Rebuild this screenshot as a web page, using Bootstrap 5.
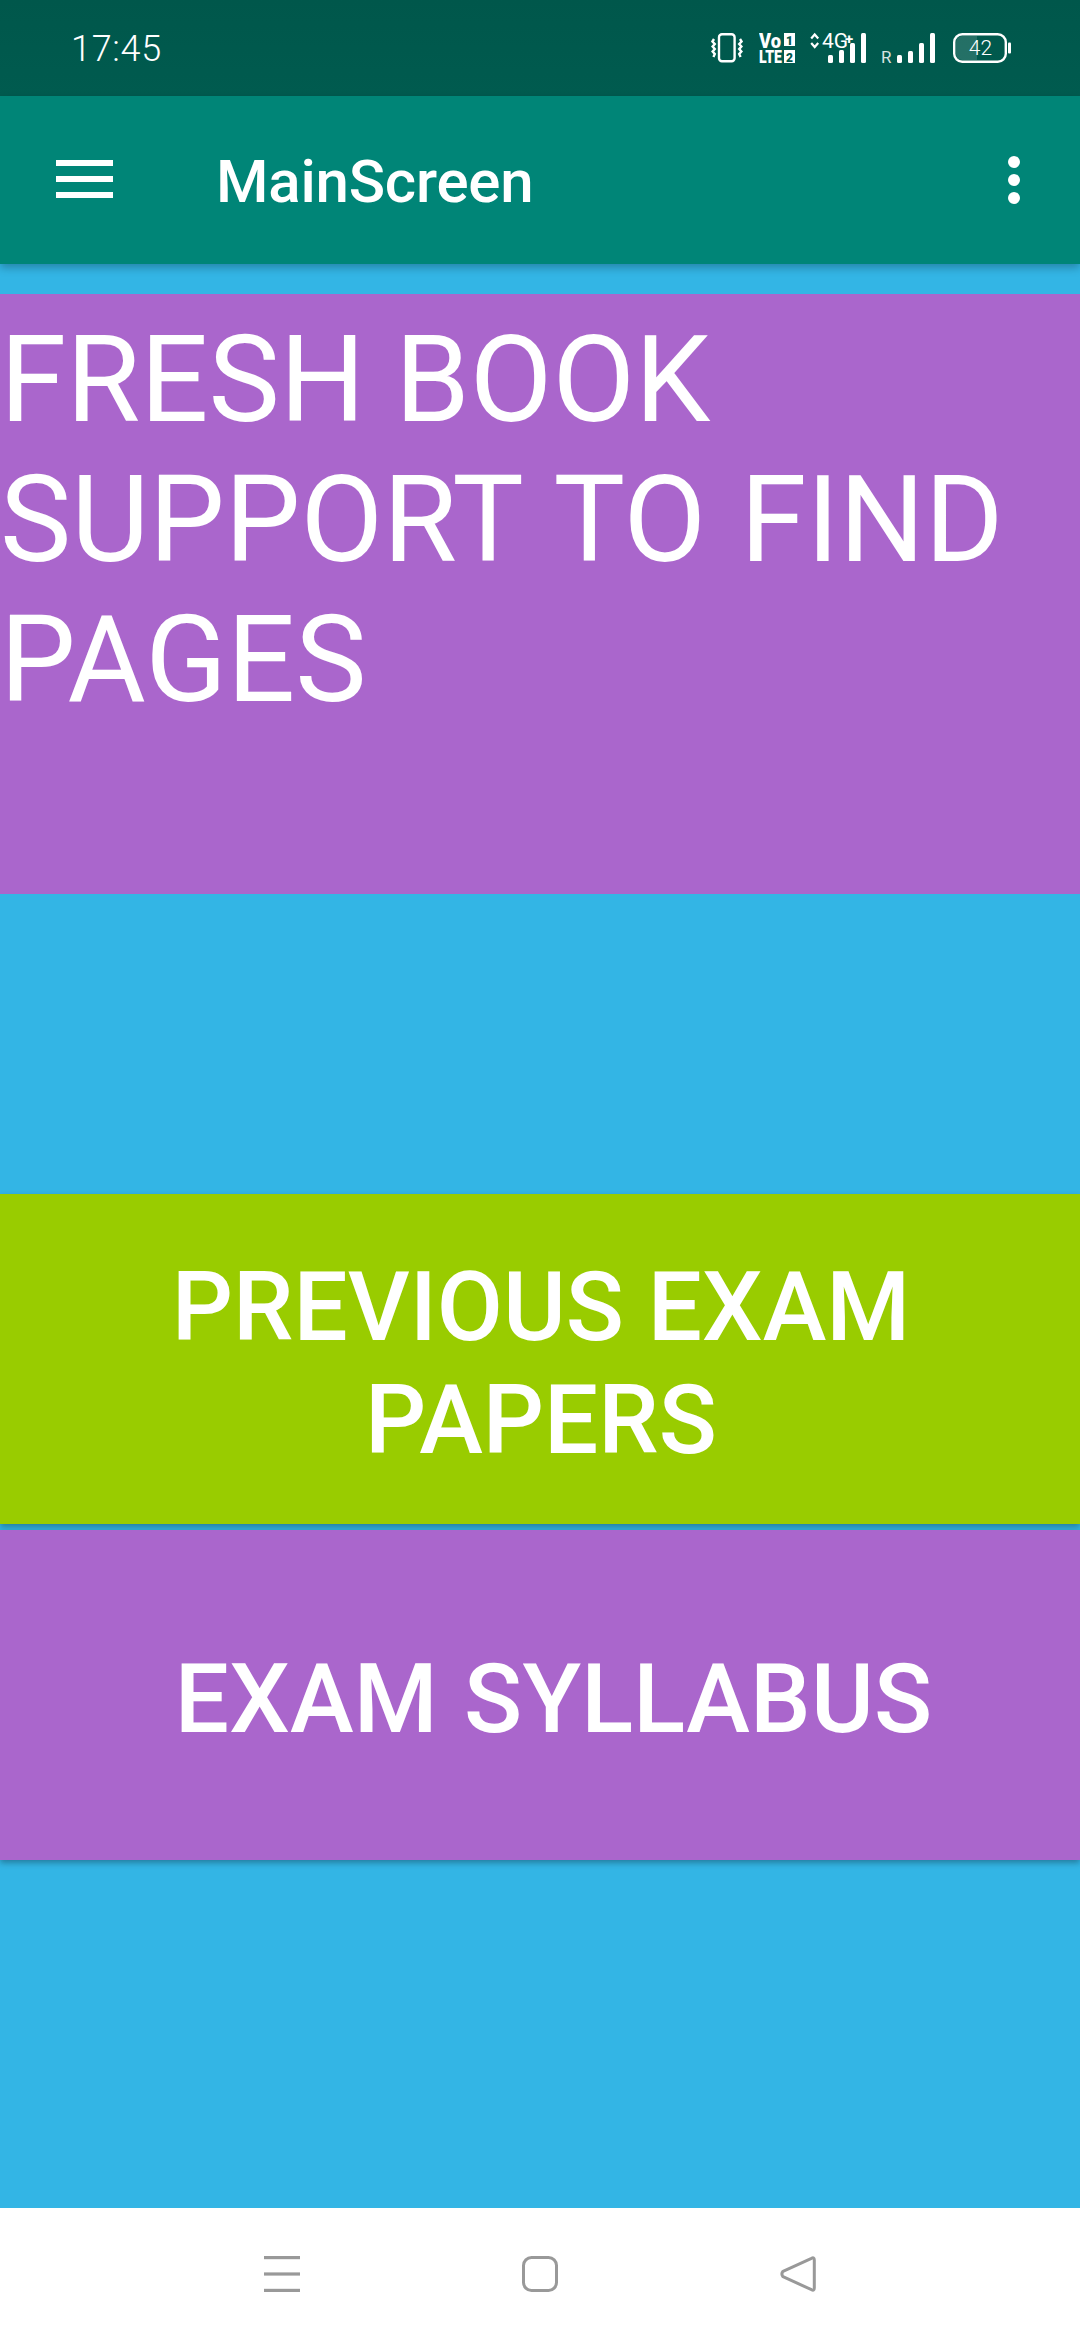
<!DOCTYPE html>
<html lang="en">
<head>
<meta charset="utf-8">
<title>MainScreen</title>
<link href="https://cdn.jsdelivr.net/npm/bootstrap@5.3.0/dist/css/bootstrap.min.css" rel="stylesheet">
<style>
html,body{margin:0;padding:0;width:1080px;height:2340px;overflow:hidden;font-family:Roboto,"Liberation Sans",sans-serif;background:#33b5e5}
.phone{width:1080px;height:2340px}
.statusbar{height:96px;background:linear-gradient(#00574b,#005b4f);color:#fff;padding-left:71px;padding-right:69px}
.clock{font-size:36px;font-weight:300;line-height:1;letter-spacing:.7px;margin-top:1px}
.staticons{gap:15px}
.gapplus1{margin-left:1px}
.gapplus3{margin-left:3px}
.appbar.navbar{height:168px;background:#008577;color:#fff;box-shadow:0 4px 8px rgba(0,0,0,.25);position:relative;z-index:2;padding:0 60px 0 56px}
.burger{margin-bottom:2px}
.apptitle{font-size:60px;font-weight:500;line-height:1;margin-left:103px;margin-top:3px;letter-spacing:-.2px}
.stage{background:#33b5e5;height:1944px;padding-top:30px}
.headline{background:#aa66cc;color:#fff;height:600px;font-size:120px;font-weight:400;line-height:140px;margin:0;padding:16px 0 0;text-align:left}
.wideline{word-spacing:4.5px}
.spacer300{height:300px}
.bigbtn{display:block;width:100%;height:330px;border:0;border-radius:0;color:#fff;font-size:96px;font-weight:500;line-height:112.5px;padding:9px 100px 0 102px;box-shadow:0 3px 6px rgba(0,0,0,.3)}
.bigbtn:hover,.bigbtn:active{color:#fff}
.b-green,.b-green:hover{background:#99cc00}
.b-purple,.b-purple:hover{background:#aa66cc;padding-left:127px;word-spacing:2px;letter-spacing:.2px}
.btngap{height:6px}
.navbottom{height:132px;background:#fff}
.navslot{width:552px}
</style>
</head>
<body>
<div class="phone d-flex flex-column">
  <div class="statusbar d-flex align-items-center justify-content-between">
    <span class="clock">17:45</span>
    <div class="staticons d-flex align-items-center">
      <svg width="32" height="30" viewBox="0 0 32 30" fill="none" stroke="#fff" stroke-width="2.4"><rect x="8" y="1.2" width="15.6" height="27" rx="3"/><path d="M3 6l-1.600 2.500L3.800 11 1.600 13.500 3.800 16l-2.200 2.500L3.800 21 2.400 24M29 6l1.600 2.500L28.200 11l2.200 2.500L28.200 16l2.200 2.500L28.200 21l1.400 3"/></svg>
      <svg class="gapplus1" width="36" height="42" viewBox="0 -6 36 42"><text x="0" y="15" font-family="Roboto" font-size="20" font-weight="900" fill="#fff" textLength="22" lengthAdjust="spacingAndGlyphs">Vo</text><rect x="25" y="0" width="11" height="13" fill="#fff"/><text x="30.500" y="11.500" font-family="Roboto" font-size="12" font-weight="900" text-anchor="middle" fill="#00574b">1</text><text x="0" y="30" font-family="Roboto" font-size="18" font-weight="900" fill="#fff" textLength="23" lengthAdjust="spacingAndGlyphs">LTE</text><rect x="25" y="17" width="11" height="13" fill="#fff"/><text x="30.500" y="28.500" font-family="Roboto" font-size="12" font-weight="900" text-anchor="middle" fill="#00574b">2</text></svg>
      <svg width="56" height="42" viewBox="0 -6 56 42"><path d="M1.200 5.500L4.700 1.500l3.500 4M1.200 10L4.700 14l3.500-4" fill="none" stroke="#fff" stroke-width="2.200"/><text x="12" y="15" font-family="Roboto" font-size="21" fill="#fff">4G</text><text x="35" y="10.500" font-family="Roboto" font-size="15" font-weight="700" fill="#fff">+</text><rect x="18" y="22" width="5" height="8" rx="1.500" fill="#fff"/><rect x="29" y="17" width="5" height="13" rx="1.500" fill="#fff"/><rect x="40" y="10" width="5" height="20" rx="1.500" fill="#fff"/><rect x="51" y="0" width="5" height="30" rx="1.500" fill="#fff"/></svg>
      <svg width="54" height="42" viewBox="0 -6 54 42"><text x="0" y="30" font-family="Roboto" font-size="17" fill="#fff" fill-opacity=".85">R</text><rect x="16" y="22" width="5" height="8" rx="1.500" fill="#fff"/><rect x="27" y="18" width="5" height="12" rx="1.500" fill="#fff"/><rect x="38" y="10" width="5" height="20" rx="1.500" fill="#fff"/><rect x="49" y="0" width="5" height="30" rx="1.500" fill="#fff"/></svg>
      <svg class="gapplus3" width="58" height="30" viewBox="0 0 58 30"><rect x="1.200" y="1.200" width="51.600" height="27.600" rx="8" fill="none" stroke="#fff" stroke-width="2.400"/><path d="M9 3h15v24H9a6 6 0 0 1-6-6V9a6 6 0 0 1 6-6z" fill="#fff" fill-opacity=".14"/><rect x="55" y="9.500" width="3" height="11" rx="1" fill="#fff"/><text x="27.500" y="22" font-family="Roboto" font-size="21" font-weight="300" text-anchor="middle" fill="#fff">42</text></svg>
    </div>
  </div>
  <nav class="appbar navbar d-flex align-items-center flex-nowrap justify-content-start">
    <svg width="57" height="38" viewBox="0 0 57 38" fill="#fff" class="burger flex-shrink-0"><rect x="0" y="0" width="57" height="6"/><rect x="0" y="16" width="57" height="6"/><rect x="0" y="32" width="57" height="6"/></svg>
    <span class="apptitle flex-grow-1">MainScreen</span>
    <svg width="12" height="48" viewBox="0 0 12 48" fill="#fff" class="flex-shrink-0"><circle cx="6" cy="6" r="6"/><circle cx="6" cy="24" r="6"/><circle cx="6" cy="42" r="6"/></svg>
  </nav>
  <main class="stage">
    <h1 class="headline">FRESH BOOK <span class="wideline">SUPPORT TO FIND</span> PAGES</h1>
    <div class="spacer300"></div>
    <button type="button" class="btn bigbtn b-green">PREVIOUS EXAM PAPERS</button>
    <div class="btngap"></div>
    <button type="button" class="btn bigbtn b-purple">EXAM SYLLABUS</button>
  </main>
  <div class="navbottom d-flex align-items-center justify-content-center">
    <div class="navslot d-flex align-items-center justify-content-between">
      <svg width="36" height="36" viewBox="0 0 36 36" fill="#999"><rect x="0" y="0" width="36" height="3.200"/><rect x="0" y="16.400" width="36" height="3.200"/><rect x="0" y="32.800" width="36" height="3.200"/></svg>
      <svg width="36" height="36" viewBox="0 0 36 36" fill="none" stroke="#999" stroke-width="3"><rect x="1.500" y="1.500" width="33" height="33" rx="8"/></svg>
      <svg width="36" height="36" viewBox="0 0 36 36" fill="none" stroke="#999" stroke-width="3" stroke-linejoin="round"><path d="M34.300 4Q34.300 .8 31.500 2.300L3 15.300Q.8 18 3 20.700L31.500 33.700Q34.300 35.200 34.300 32Z"/></svg>
    </div>
  </div>
</div>
<script src="https://cdn.jsdelivr.net/npm/bootstrap@5.3.0/dist/js/bootstrap.bundle.min.js"></script>
</body>
</html>
